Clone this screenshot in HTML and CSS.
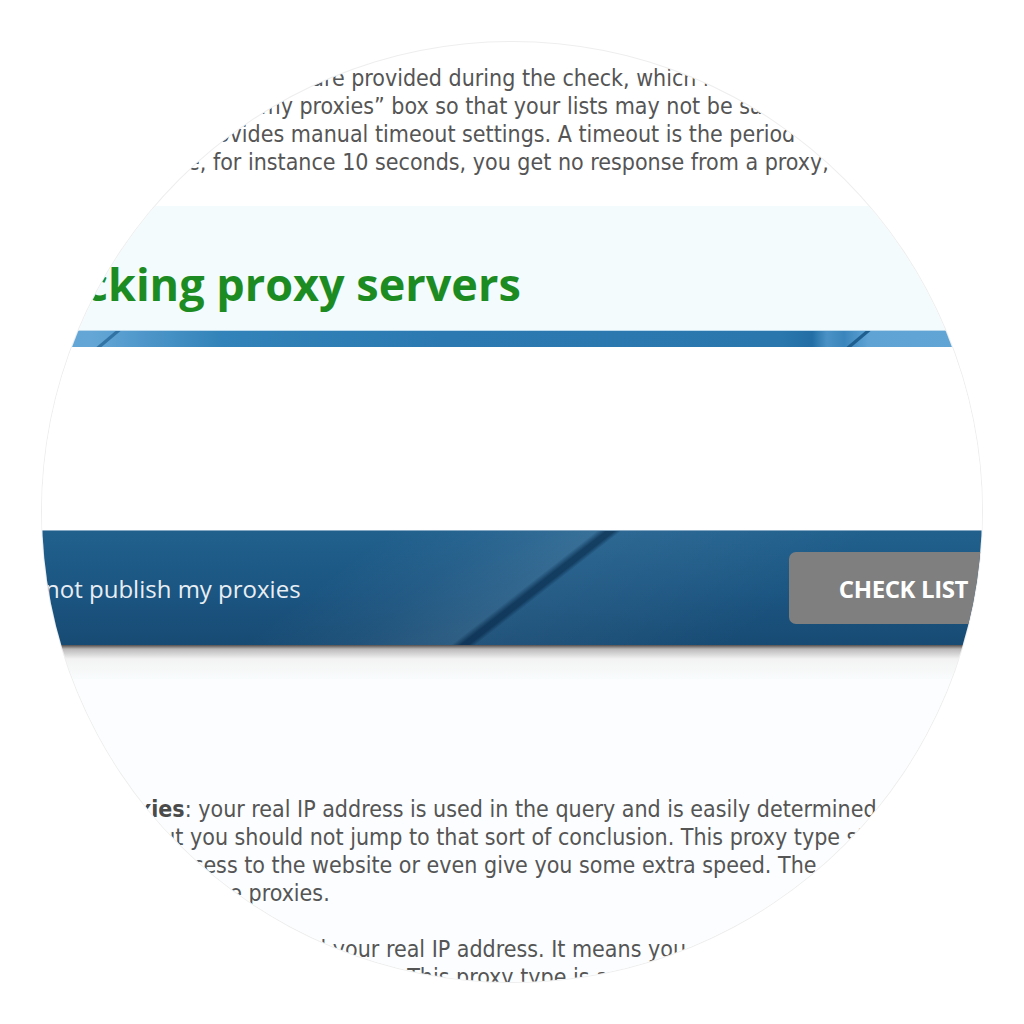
FILE: index.html
```html
<!DOCTYPE html>
<html>
<head>
  <title>Proxy checker</title>
  <link rel="stylesheet" href="styles.css">
</head>
<body>
  <div class="lens">
    <div class="page">
      <p class="intro">
        This tool is quick and free. Results are provided during the check, which lets you see the progress<br>
        Now, tick the “Do not publish my proxies” box so that your lists may not be saved in our database<br>
        In addition the checker provides manual timeout settings. A timeout is the period of time during which<br>
        Then, if during this time, for instance 10 seconds, you get no response from a proxy, it is considered dead.
      </p>

      <div class="title-band">
        <h1>Checking proxy servers</h1>
      </div>
      <div class="stripe"></div>

      <div class="list-area"></div>

      <div class="options">
        <label class="publish"><span class="box"></span>Do not publish my proxies</label>
        <button class="check">CHECK LIST</button>
      </div>
      <div class="options-shadow"></div>

      <div class="types">
        <p><b>Transparent proxies</b>: your real IP address is used in the query and is easily determined<br>
          by the visited site, but you should not jump to that sort of conclusion. This proxy type still<br>
          can easily grant you access to the website or even give you some extra speed. The<br>
          websites can block all these proxies.</p>
        <p><b>Anonymous proxies</b>: they conceal your real IP address. It means you<br>
          remain anonymous to the sites you access. This proxy type is a good choice for most tasks.</p>
      </div>
    </div>
  </div>
</body>
</html>
```

FILE: styles.css
```css
body {
  margin: 0;
  background: #fff;
}

.lens {
  width: 940px;
  height: 940px;
  margin: 42px;
  border-radius: 50%;
  overflow: hidden;
  background: #fff;
  box-shadow: 0 0 0 1px #eeeeee;
}

.page {
  width: 1220px;
  margin-left: -120px;
}

.intro,
.types p {
  margin: 0;
  padding-left: 29px;
  font-family: "DejaVu Sans Condensed", "DejaVu Sans", sans-serif;
  font-size: 23px;
  line-height: 28px;
  color: #555;
  white-space: nowrap;
}

.intro {
  padding-top: 22px;
}

.title-band {
  margin-top: 30px;
  height: 124px;
  background: #f3fbfd;
}

h1 {
  margin: 0;
  padding: 47px 0 0 78px;
  font-family: "Open Sans", sans-serif;
  font-size: 45px;
  font-weight: 700;
  line-height: 61px;
  color: #1c8c22;
}

/* thin blue bar under the title, with two glossy slashes */
.stripe {
  position: relative;
  height: 17px;
  overflow: hidden;
  border-top: 1px solid #b9d8ec;
  box-sizing: border-box;
  background: linear-gradient(90deg, #5fa4d5 0, #64a7d6 170px, #4b94c8 230px, #3283b9 300px, #2b79b0 520px, #2a77ae 860px, #226ea5 890px, #4a92c6 905px, #3a85bc 922px, #5ea3d4 946px, #66a9d7 1220px);
}

.stripe::before,
.stripe::after {
  content: "";
  position: absolute;
  top: 0;
  bottom: 0;
  width: 5px;
  background: #1f5f90;
  transform: skewX(-50deg);
}

.stripe::before {
  left: 184px;
  opacity: 0.7;
}

.stripe::after {
  left: 934px;
}

.list-area {
  height: 183px;
  background: #fff;
}

/* dark brushed panel: one sharp slash with a soft glow on its left */
.options {
  display: flex;
  align-items: center;
  height: 115px;
  padding: 0 124px 0 45px;
  box-sizing: border-box;
  border-top: 1px solid #86a8c2;
  background:
    linear-gradient(142deg, rgba(255, 255, 255, 0) 34%, rgba(255, 255, 255, 0.04) 42%, rgba(255, 255, 255, 0.1) 49.4%, rgba(12, 42, 72, 0.6) 50.1%, rgba(12, 42, 72, 0.6) 50.7%, rgba(255, 255, 255, 0.05) 51.2%, rgba(255, 255, 255, 0.03) 60%, rgba(255, 255, 255, 0) 70%),
    linear-gradient(180deg, #21608d 0%, #1b5581 55%, #174b74 100%);
}

.publish {
  display: flex;
  align-items: center;
  gap: 18px;
  font-family: "Open Sans", sans-serif;
  font-size: 24px;
  color: #e8eef4;
}

.box {
  width: 22px;
  height: 22px;
  border-radius: 3px;
  background: #fff;
}

.check {
  margin-left: auto;
  height: 72px;
  padding: 0 50px;
  border: none;
  border-radius: 7px;
  background: #7f7f7f;
  font-family: "Open Sans", sans-serif;
  font-size: 24px;
  font-weight: 700;
  letter-spacing: -0.4px;
  color: #fff;
  cursor: pointer;
}

.options-shadow {
  height: 34px;
  background: linear-gradient(180deg, rgba(66, 60, 60, 0.9) 0, rgba(120, 115, 115, 0.5) 4px, rgba(200, 200, 200, 0.22) 14px, rgba(249, 252, 253, 1) 34px);
}

.types {
  padding-top: 116px;
  background: #fbfdfe;
}

.types p {
  margin-bottom: 28px;
}

.types b {
  color: #4a4a4a;
}
```
